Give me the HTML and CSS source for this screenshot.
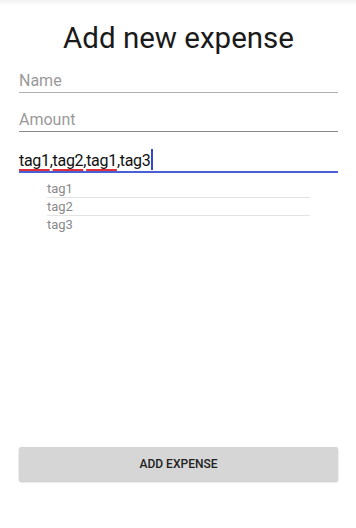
FILE: index.html
```html
<!DOCTYPE html>
<html lang="en">
<head>
    <meta charset="UTF-8">
    <meta name="viewport" content="width=device-width, initial-scale=1.0">
    <title>Add new expense</title>
    <link rel="stylesheet" href="styles.css">
</head>
<body>
    <div class="screen">
        <h1 class="title">Add new expense</h1>
        <input class="field field-name" type="text" placeholder="Name">
        <input class="field field-amount" type="text" placeholder="Amount">
        <div class="field field-tags">
            <span class="typo">tag1</span>,<span class="typo">tag2</span>,<span class="typo">tag1</span>,tag3<span class="caret"></span>
        </div>
        <ul class="suggestions">
            <li>tag1</li>
            <li>tag2</li>
            <li>tag3</li>
        </ul>
        <button class="submit">ADD EXPENSE</button>
    </div>
</body>
</html>
```

FILE: styles.css
```css
body {
    margin: 0;
    font-family: Roboto, "Noto Sans", sans-serif;
    background: #ffffff;
    color: #111111;
}
.screen {
    display: flex;
    flex-direction: column;
    min-height: 528px;
    box-sizing: border-box;
    padding: 0 18px 47px 19px;
    background: linear-gradient(#f2f2f2, #ffffff 6px);
}
.title {
    margin: 22px 0 0;
    font-size: 29.5px;
    line-height: 32px;
    font-weight: 400;
    text-align: center;
    color: #1a1a1a;
}
.field {
    display: block;
    width: 100%;
    box-sizing: border-box;
    margin: 0;
    padding: 0 0 2px;
    border: none;
    outline: none;
    background: transparent;
    font-family: inherit;
    font-size: 16px;
    line-height: 20px;
    height: 23px;
    color: #111111;
}
.field::placeholder {
    color: #9a9a9a;
}
.field-name {
    margin-top: 16px;
    border-bottom: 1px solid #b0b0b0;
}
.field-amount {
    margin-top: 16px;
    border-bottom: 1px solid #8a8a8a;
}
.field-tags {
    margin-top: 17px;
    height: 24px;
    padding-bottom: 2px;
    border-bottom: 2px solid #4a5fd6;
    white-space: nowrap;
    letter-spacing: -0.3px;
}
.typo {
    text-decoration: underline;
    text-decoration-color: #e0303a;
    text-decoration-thickness: 2px;
    text-underline-offset: 3px;
}
.caret {
    display: inline-block;
    width: 2px;
    height: 21px;
    margin-left: 1px;
    vertical-align: -4px;
    background: #3347c9;
}
.suggestions {
    list-style: none;
    margin: 7px 0 0 28px;
    padding: 0;
    width: 263px;
}
.suggestions li {
    font-size: 13px;
    line-height: 17px;
    color: #8a8a8a;
    border-bottom: 1px solid #e4e4e4;
}
.suggestions li:last-child {
    border-bottom: none;
}
.submit {
    margin-top: auto;
    height: 34px;
    border: none;
    border-radius: 2px;
    background: #d6d6d6;
    box-shadow: 0 1px 2px rgba(0, 0, 0, 0.25);
    font-family: inherit;
    font-size: 12px;
    font-weight: 500;
    color: #222222;
    cursor: pointer;
}
```
